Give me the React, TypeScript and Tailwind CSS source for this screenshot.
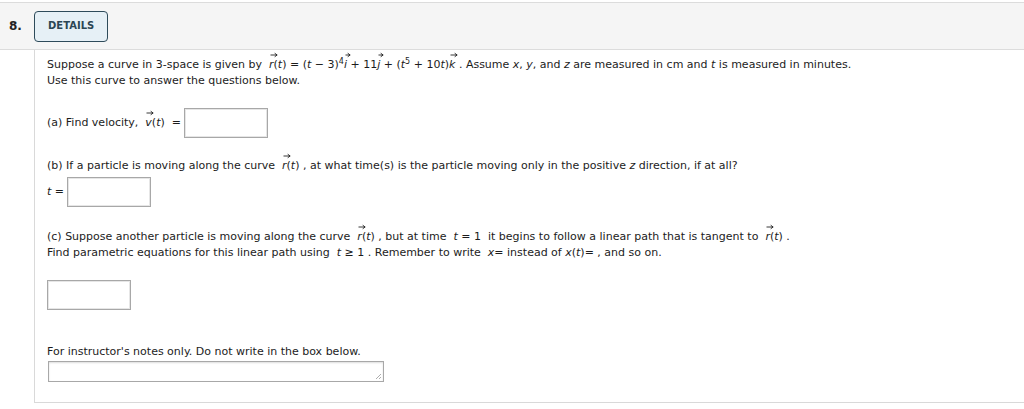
import React from "react";

const Vec = ({ c, w = 8 }: { c: string; w?: number }) => (
  <span className="relative inline-block italic">
    <svg
      className="absolute left-[1px] top-[-5px]"
      width={w}
      height="6"
      viewBox={`0 0 ${w} 6`}
    >
      <path
        d={`M0.5 3H${w - 1}M${w - 3.3} 1.2L${w - 0.8} 3L${w - 3.3} 4.8`}
        stroke="#222"
        strokeWidth="0.9"
        fill="none"
      />
    </svg>
    {c}
  </span>
);

const Box = ({ w = "w-[84px]" }: { w?: string }) => (
  <div className={`${w} h-[30px] border border-[#a8a8a8] bg-white shadow-[inset_0_0_0_1px_#e6e6e6]`} />
);

export default function App() {
  return (
    <div className="w-[1024px] h-[409px] bg-white text-[#1c1c1c] font-['DejaVu_Sans',Verdana,sans-serif] text-[11px] leading-[16px] overflow-hidden">
      {/* header */}
      <div className="mt-[2px] h-[48px] bg-[#f5f5f5] border-t border-b border-[#dcdcdc] flex items-center">
        <span className="w-[34px] pl-[9px] font-bold text-[12px] text-[#222]">8.</span>
        <div className="h-[31px] px-[13px] flex items-center rounded-[4px] border-[1.5px] border-[#2e4b5a] bg-[#e6f0f6] text-[#2b4654] text-[10px] font-semibold">
          DETAILS
        </div>
      </div>

      {/* body */}
      <div className="ml-[34px] h-[353px] border-l border-b border-[#d9d9d9] pl-[12px] pt-[7px]">
        <p>
          Suppose a curve in 3-space is given by&nbsp; <Vec c="r" />(<i>t</i>) = (<i>t</i> − 3)<sup className="text-[8px]">4</sup>
          <Vec c="i" w={6} />&nbsp;+ 11<Vec c="j" w={6} />&nbsp;+ (<i>t</i>
          <sup className="text-[8px]">5</sup> + 10<i>t</i>)<Vec c="k" /> . Assume <i>x</i>, <i>y</i>, and <i>z</i> are
          measured in cm and <i>t</i> is measured in minutes.
          <br />
          Use this curve to answer the questions below.
        </p>

        <div className="mt-[19px] flex items-center h-[30px]">
          <span>
            (a) Find velocity,&nbsp; <Vec c="v" />(<i>t</i>)&nbsp; =
          </span>
          <div className="ml-[3px]">
            <Box />
          </div>
        </div>

        <p className="mt-[20px]">
          (b) If a particle is moving along the curve&nbsp; <Vec c="r" />(<i>t</i>) , at what time(s) is the particle moving
          only in the positive <i>z</i> direction, if at all?
        </p>
        <div className="mt-[3px] flex items-center h-[30px]">
          <span>
            <i>t</i> =
          </span>
          <div className="ml-[3px]">
            <Box />
          </div>
        </div>

        <p className="mt-[22px]">
          (c) Suppose another particle is moving along the curve&nbsp; <Vec c="r" />(<i>t</i>) , but at time&nbsp; <i>t</i> = 1&nbsp; it
          begins to follow a linear path that is tangent to&nbsp; <Vec c="r" />(<i>t</i>) .
          <br />
          Find parametric equations for this linear path using&nbsp; <i>t</i> ≥ 1 . Remember to write&nbsp; <i>x</i>= instead of{" "}
          <i>x</i>(<i>t</i>)= , and so on.
        </p>

        <div className="mt-[19px]">
          <Box />
        </div>

        <p className="mt-[34px]">For instructor's notes only. Do not write in the box below.</p>
        <div className="mt-[1px] ml-[1px] relative w-[336px] h-[21px] border border-[#a8a8a8] shadow-[inset_0_1px_2px_#ddd]">
          <svg className="absolute right-[1px] bottom-[1px]" width="7" height="7" viewBox="0 0 7 7">
            <path d="M6 1L1 6M6 4L4 6" stroke="#999" strokeWidth="0.8" />
          </svg>
        </div>
      </div>
    </div>
  );
}
